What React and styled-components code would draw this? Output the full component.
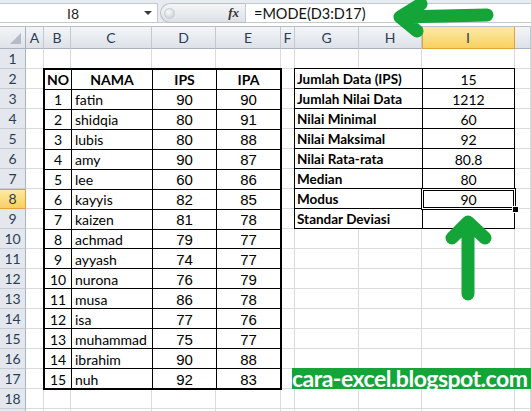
import React from 'react'
import styled, { createGlobalStyle, css } from 'styled-components'

const calibri = `Lato, "Noto Sans", "Liberation Sans", sans-serif`
const arial = `"Liberation Sans", Arial, sans-serif`

// J is only a sliver at the right edge, its letter lies off-screen
const COLS = ['A', 'B', 'C', 'D', 'E', 'F', 'G', 'H', 'I', 'J']
const HIDDEN_LABELS = ['J']
const COL_WIDTHS = [26, 18, 27, 81, 64, 65, 14, 64, 63, 93, 16]
const ROW_COUNT = 19
const LAST_LABELLED_ROW = 18
const ACTIVE_COL = 'I'
const ACTIVE_ROW = 8

const students = [
  [1, 'fatin', 90, 90],
  [2, 'shidqia', 80, 91],
  [3, 'lubis', 80, 88],
  [4, 'amy', 90, 87],
  [5, 'lee', 60, 86],
  [6, 'kayyis', 82, 85],
  [7, 'kaizen', 81, 78],
  [8, 'achmad', 79, 77],
  [9, 'ayyash', 74, 77],
  [10, 'nurona', 76, 79],
  [11, 'musa', 86, 78],
  [12, 'isa', 77, 76],
  [13, 'muhammad', 75, 77],
  [14, 'ibrahim', 90, 88],
  [15, 'nuh', 92, 83],
]

const stats = [
  ['Jumlah Data (IPS)', '15'],
  ['Jumlah Nilai Data', '1212'],
  ['Nilai Minimal', '60'],
  ['Nilai Maksimal', '92'],
  ['Nilai Rata-rata', '80.8'],
  ['Median', '80'],
  ['Modus', '90'],
  ['Standar Deviasi', ''],
]

const GlobalStyle = createGlobalStyle`
  html, body {
    margin: 0;
    padding: 0;
    background: #fff;
  }
  body {
    font-family: ${calibri};
  }
`

const Page = styled.div`
  position: relative;
  width: 531px;
  height: 411px;
  overflow: hidden;
  background: #fff;
`

/* formula bar */

const FormulaBar = styled.div`
  display: flex;
  align-items: flex-start;
  height: 27px;
  box-sizing: border-box;
  padding-top: 3px;
  background: #e8ebef;
  border-bottom: 1px solid #b7bec8;
  box-shadow: inset 0 -3px 0 #fff, inset 0 -4px 0 #c9ced5;
`

const NameBox = styled.div`
  display: flex;
  align-items: center;
  width: 158px;
  height: 20px;
  box-sizing: border-box;
  background: #fff;
  border: 1px solid #c3c9d1;
  border-left: none;
  font-family: ${calibri};
  font-size: 14px;
  color: #1f1f1f;
`

const NameText = styled.span`
  flex: 1;
  text-align: center;
  padding-left: 2px;
`

const DropArrow = styled.span`
  width: 0;
  height: 0;
  margin-right: 5px;
  border-left: 4px solid transparent;
  border-right: 4px solid transparent;
  border-top: 4px solid #3a3a3a;
`

const FxPanel = styled.div`
  display: flex;
  align-items: center;
  justify-content: space-between;
  width: 85px;
  height: 20px;
  margin-left: 2px;
  box-sizing: border-box;
  padding: 0 6px 0 3px;
  border: 1px solid #b9c0c9;
  border-right: none;
  border-radius: 10px 0 0 10px;
  background: linear-gradient(#f4f5f7, #dde1e6);
`

const GripDot = styled.span`
  width: 9px;
  height: 9px;
  border-radius: 50%;
  background: radial-gradient(circle at 40% 35%, #fafafa, #c4c8cd);
  border: 1px solid #c9cdd2;
`

const FxLabel = styled.span`
  font-family: "Liberation Serif", "DejaVu Serif", serif;
  font-style: italic;
  font-weight: bold;
  font-size: 13px;
  color: #333;
`

const FormulaInput = styled.div`
  flex: 1;
  display: flex;
  align-items: center;
  height: 20px;
  box-sizing: border-box;
  padding-left: 8px;
  background: #fff;
  border: 1px solid #c3c9d1;
  border-right: none;
  font-family: ${calibri};
  font-size: 14.5px;
  color: #111;
`

/* sheet grid */

const Sheet = styled.div`
  display: grid;
  grid-template-columns: ${COL_WIDTHS.map((w) => `${w}px`).join(' ')};
  grid-template-rows: 22px repeat(${ROW_COUNT}, 20px);
`

const GridCell = styled.div`
  grid-row: ${(p) => p.$row};
  grid-column: ${(p) => p.$col};
  border-right: 1px solid #dadada;
  border-bottom: 1px solid #dadada;
`

const headFace = css`
  display: flex;
  align-items: center;
  justify-content: center;
  box-sizing: border-box;
  font-family: ${calibri};
  font-size: 14px;
  color: #2b3d56;
`

const activeFace = css`
  background: linear-gradient(#fdeaa8, #f8d15f);
  border-color: #e0a23c;
`

const Corner = styled.div`
  ${headFace};
  position: relative;
  grid-row: 1;
  grid-column: 1;
  background: linear-gradient(#f2f4f7, #dfe3e9);
  border-right: 1px solid #a9b2be;
  border-bottom: 1px solid #a9b2be;

  &::after {
    content: '';
    position: absolute;
    right: 4px;
    bottom: 4px;
    width: 11px;
    height: 11px;
    background: #b6bcc3;
    clip-path: polygon(100% 0, 100% 100%, 0 100%);
  }
`

const ColHead = styled.div`
  ${headFace};
  grid-row: 1;
  grid-column: ${(p) => p.$col};
  background: linear-gradient(#f3f5f8, #dde2e8);
  border-right: 1px solid #c2c8d0;
  border-bottom: 1px solid #a9b2be;
  ${(p) =>
    p.$active &&
    css`
      ${activeFace};
      box-shadow: inset 1px 0 0 #e0a23c;
    `}
`

const RowHead = styled.div`
  ${headFace};
  grid-row: ${(p) => p.$row};
  grid-column: 1;
  background: #e4e8ee;
  border-right: 1px solid #a9b2be;
  border-bottom: 1px solid #c5cbd3;
  ${(p) =>
    p.$active &&
    css`
      ${activeFace};
      box-shadow: inset 0 1px 0 #e0a23c;
    `}
`

/* student table B2:E17 */

const StudentTable = styled.div`
  grid-column: 3 / 7;
  grid-row: 3 / 19;
  margin: -1px;
  display: grid;
  grid-template-columns: 26px 80px 63px 1fr;
  grid-template-rows: repeat(16, 1fr);
  gap: 1px;
  background: #000;
  border: 2px solid #000;
`

const TCell = styled.div`
  display: flex;
  align-items: center;
  justify-content: ${(p) => p.$align || 'center'};
  padding: ${(p) => (p.$align === 'flex-start' ? '1px 0 0 3px' : '1px 0 0')};
  background: #fff;
  font-family: ${(p) => (p.$num ? arial : calibri)};
  font-size: ${(p) => (p.$num ? '15px' : '14px')};
  font-weight: ${(p) => (p.$bold ? 700 : 400)};
  color: #000;
  white-space: nowrap;
  overflow: hidden;
`

/* summary table G2:I9 */

const StatsTable = styled.div`
  grid-column: 8 / 11;
  grid-row: 3 / 11;
  margin: -1px 0 0 -1px;
  display: grid;
  grid-template-columns: 127px 1fr;
  grid-template-rows: repeat(8, 1fr);
  gap: 1px;
  background: #000;
  border: 1px solid #000;
`

const StatLabel = styled.div`
  display: flex;
  align-items: center;
  padding: 1px 0 0 2px;
  background: #fff;
  font-family: ${calibri};
  font-size: 13.5px;
  font-weight: 700;
  color: #000;
  white-space: nowrap;
`

const StatValue = styled.div`
  display: flex;
  align-items: center;
  justify-content: center;
  padding-top: 1px;
  background: #fff;
  font-family: ${calibri};
  font-size: 14px;
  color: #000;
`

const Selection = styled.div`
  position: relative;
  grid-column: 10;
  grid-row: 9;
  margin: -1px;
  border: 1px solid #000;
  box-shadow: inset 0 0 0 1px #fff, inset 0 0 0 2px #000;
  pointer-events: none;
`

const FillHandle = styled.span`
  position: absolute;
  right: -4px;
  bottom: -4px;
  width: 5px;
  height: 5px;
  background: #000;
  border: 1px solid #fff;
`

/* overlays */

const Arrows = styled.svg`
  position: absolute;
  left: 0;
  top: 0;
  pointer-events: none;
`

const Watermark = styled.div`
  position: absolute;
  left: 292px;
  top: 368px;
  width: 260px;
  height: 21px;
  background: #13a538;
  color: #fff;
  font-family: ${calibri};
  font-weight: 700;
  font-size: 23px;
  line-height: 21px;
  letter-spacing: -0.5px;
  white-space: nowrap;
`

const App = () => {
  const rows = Array.from({ length: ROW_COUNT }, (_, i) => i + 1)

  return (
    <Page>
      <GlobalStyle />
      <FormulaBar>
        <NameBox>
          <NameText>I8</NameText>
          <DropArrow />
        </NameBox>
        <FxPanel>
          <GripDot />
          <FxLabel>fx</FxLabel>
        </FxPanel>
        <FormulaInput>=MODE(D3:D17)</FormulaInput>
      </FormulaBar>

      <Sheet>
        <Corner />
        {COLS.map((c, i) => (
          <ColHead key={c} $col={i + 2} $active={c === ACTIVE_COL}>
            {HIDDEN_LABELS.includes(c) ? null : c}
          </ColHead>
        ))}
        {rows.map((r) => (
          <React.Fragment key={r}>
            <RowHead $row={r + 1} $active={r === ACTIVE_ROW}>
              {r <= LAST_LABELLED_ROW ? r : null}
            </RowHead>
            {COLS.map((c, i) => (
              <GridCell key={c} $row={r + 1} $col={i + 2} />
            ))}
          </React.Fragment>
        ))}

        <StudentTable>
          <TCell $bold>NO</TCell>
          <TCell $bold>NAMA</TCell>
          <TCell $bold>IPS</TCell>
          <TCell $bold>IPA</TCell>
          {students.map(([no, name, ips, ipa]) => (
            <React.Fragment key={no}>
              <TCell>{no}</TCell>
              <TCell $align="flex-start">{name}</TCell>
              <TCell $num>{ips}</TCell>
              <TCell $num>{ipa}</TCell>
            </React.Fragment>
          ))}
        </StudentTable>

        <StatsTable>
          {stats.map(([label, value]) => (
            <React.Fragment key={label}>
              <StatLabel>{label}</StatLabel>
              <StatValue>{value}</StatValue>
            </React.Fragment>
          ))}
        </StatsTable>

        <Selection>
          <FillHandle />
        </Selection>
      </Sheet>

      <Arrows width="531" height="411" viewBox="0 0 531 411">
        <g
          fill="none"
          stroke="#13a538"
          strokeWidth="13"
          strokeLinecap="round"
          strokeLinejoin="round"
        >
          <path d="M487 15 L401 17 M421 4 L400 17 L417 31" />
          <path d="M468 294 L468 222 M452 238 L468 222 L485 238" />
        </g>
      </Arrows>

      <Watermark>cara-excel.blogspot.com</Watermark>
    </Page>
  )
}

export default App
